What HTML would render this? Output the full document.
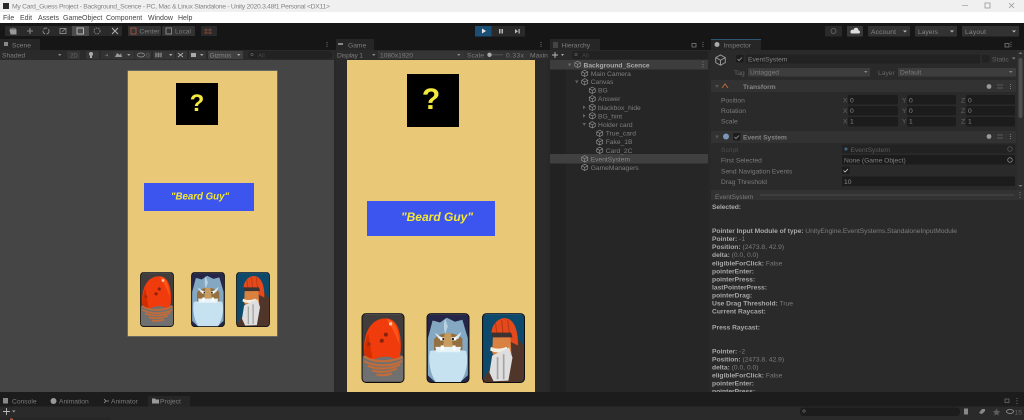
<!DOCTYPE html>
<html><head><meta charset="utf-8"><style>
html,body{margin:0;padding:0;background:#282828;width:1024px;height:420px;overflow:hidden}
svg{display:block}
text{font-family:"Liberation Sans",sans-serif;font-size:6.7px;fill:#aaa;white-space:pre}
.b{font-weight:bold;fill:#a8a8a8}
.d{fill:#7c7c7c}
.t{fill:#858585}
.m{fill:#666}
.i{fill:none;stroke:#999;stroke-width:.8}
</style></head><body>
<svg width="1024" height="420" viewBox="0 0 1024 420" xmlns="http://www.w3.org/2000/svg">
<defs>
<filter id="s" x="0" y="0" width="100%" height="100%"><feGaussianBlur stdDeviation="0.38"/></filter>
<symbol id="c" viewBox="0 0 10 10"><path d="M5 .8 9 3v4.2L5 9.3 1 7.2V3zM1 3l4 2.200L9 3M5 5.200v4" fill="none" stroke="#999" stroke-width=".8"/></symbol>
<symbol id="k1" viewBox="0 0 127 207">
<rect x="1" y="1" width="125" height="205" rx="12" fill="#423c3c"/>
<rect x="3" y="125" width="121" height="78" rx="8" fill="#707070"/>
<path d="M8 118C4 62 26 16 72 16c36 0 46 44 44 92-1 24-8 32-22 26-20-9-36-4-52 1-22 7-33 2-34-17z" fill="#f03a08"/>
<path d="M74 18c24 0 36 32 38 76-14-40-28-58-38-76z" fill="#ff5418"/>
<path d="M8 118c2-20 4-40 12-58 4 30 8 50 12 72-14 4-23 2-24-14z" fill="#d42e05"/>
<circle cx="86" cy="32" r="5" fill="#ffc9a8"/><circle cx="72" cy="64" r="6" fill="#8a2208"/><circle cx="60" cy="82" r="6" fill="#8a2208"/><circle cx="22" cy="92" r="5" fill="#9c2a0a"/>
<path d="M8 128c22 18 74 20 114 2M8 142c28 16 80 18 112 0M18 156c28 12 66 10 96-3M32 170c24 7 50 4 72-6M44 182c15 3 32 2 46-3" fill="none" stroke="#c06c3a" stroke-width="6.500"/>
<rect x="1.500" y="1.500" width="124" height="204" rx="12" fill="none" stroke="#111" stroke-width="3"/>
<path d="M10 3h107" stroke="#555" stroke-width="3"/>
</symbol>
<symbol id="k2" viewBox="0 0 127 207">
<rect x="1" y="1" width="125" height="205" rx="12" fill="#28284a"/>
<path d="M4 75 18 22l22 6 20-14 24 12 22-6 16 54v110L100 204H25L4 184z" fill="#84a8c2"/>
<path d="M22 78c15-24 66-24 84-2v44H22z" fill="#94703f"/>
<path d="M24 58 60 82 36 76zM104 56 70 82l24-6z" fill="#d9e8f2"/>
<path d="M55 16c-6 16-4 32 0 46l8-22z" fill="#b8d2e2"/>
<rect x="40" y="72" width="16" height="9" fill="#fff"/><rect x="72" y="72" width="16" height="9" fill="#fff"/><rect x="47" y="74" width="6" height="6" fill="#222"/><rect x="75" y="74" width="6" height="6" fill="#222"/>
<path d="M54 60h18l7 48H48z" fill="#c79c60"/>
<path d="M10 112 45 108h38l34 4c8 32 0 68-16 92H28C12 184 4 144 10 112z" fill="#c6e2f1"/>
<path d="M26 100h76l-4 16H30z" fill="#e6f3f9"/><rect x="42" y="96" width="9" height="14" fill="#fff"/><rect x="77" y="96" width="9" height="14" fill="#fff"/>
<rect x="1.500" y="1.500" width="124" height="204" rx="12" fill="none" stroke="#111" stroke-width="3"/>
<path d="M10 3h107" stroke="#444" stroke-width="3"/>
</symbol>
<symbol id="k3" viewBox="0 0 127 207">
<rect x="1" y="1" width="125" height="205" rx="12" fill="#0c4a6a"/>
<path d="M50 125 100 68l26 32v94l-14 12H3V196z" fill="#4f3429"/>
<path d="M28 60c0-28 24-50 46-44 24 6 34 44 32 80L28 58z" fill="#e3481a"/>
<path d="M40 30l4 32M58 20l4 42M76 20l6 56" stroke="#b83810" stroke-width="3"/>
<path d="M28 58h58l4 14H30z" fill="#3a3030"/>
<path d="M32 72h52l3 50-24 24-28-18-8-20 4-10z" fill="#d8813f"/>
<path d="M26 100c14 8 32 6 46 0l6 9c-14 10-38 10-54 2z" fill="#f2eee2"/>
<path d="M30 126 80 102l10 30-12 68-44 2-12-26z" fill="#dedede"/>
<path d="M46 130v66M64 122v74" stroke="#a4a4a4" stroke-width="5"/>
<rect x="1.500" y="1.500" width="124" height="204" rx="12" fill="none" stroke="#111" stroke-width="3"/>
<path d="M10 3h107" stroke="#3c5a6c" stroke-width="3"/>
</symbol>
</defs>
<g filter="url(#s)">
<!-- Window chrome -->
<rect width="1024" height="12" fill="#f0f0f0"/>
<rect y="12" width="1024" height="11" fill="#fff"/>
<rect x="3" y="3" width="6" height="6" fill="#2a2a2a"/>
<text x="12" y="8.600" textLength="318" lengthAdjust="spacing" style="fill:#858585;font-size:6.800px">My Card_Guess Project - Background_Scence - PC, Mac &amp; Linux Standalone - Unity 2020.3.48f1 Personal &lt;DX11&gt;</text>
<path d="M962 5.500h6" stroke="#aaa" stroke-width=".8"/>
<rect x="985" y="3" width="5" height="5" fill="none" stroke="#999" stroke-width=".8"/>
<path d="M1009 3l5 5M1014 3l-5 5" stroke="#999" stroke-width=".8"/>
<g style="font-size:7px"><text x="3" y="20" style="fill:#444;font-size:7px">File</text><text x="20" y="20" style="fill:#444;font-size:7px">Edit</text><text x="38" y="20" style="fill:#444;font-size:7px">Assets</text><text x="63" y="20" style="fill:#444;font-size:7px">GameObject</text><text x="106" y="20" style="fill:#444;font-size:7px">Component</text><text x="148" y="20" style="fill:#444;font-size:7px">Window</text><text x="178" y="20" style="fill:#444;font-size:7px">Help</text></g>

<!-- Toolbar -->
<rect y="23" width="1024" height="27" fill="#191919"/>
<rect x="5" y="26" width="117" height="10" rx="1" fill="#2b2b2b"/>
<rect x="72" y="26" width="17" height="10" fill="#4c4c4c"/>
<rect x="128" y="26" width="33" height="10" rx="1" fill="#303030"/>
<rect x="162" y="26" width="33" height="10" rx="1" fill="#303030"/>
<rect x="201" y="26" width="16" height="10" rx="1" fill="#2c2c2c"/>
<path d="M10 30h6v4h-5zM11 28v3M13 27.500v3M15 28v3" stroke="#999" stroke-width="1" fill="#999"/>
<path d="M27 31h6M30 28v6" stroke="#888" stroke-width="1.100"/>
<circle cx="46" cy="31" r="3" class="i" stroke-dasharray="4 1.500"/>
<rect x="60" y="28.500" width="6" height="5" class="i"/><path d="M62 32l3-3" class="i"/>
<rect x="77" y="28" width="6.500" height="6" fill="none" stroke="#ccc" stroke-width=".8"/>
<circle cx="97" cy="31" r="3" class="i" stroke-dasharray="1.500 1"/>
<path d="M112 28l6 6M118 28l-6 6" stroke="#aaa" stroke-width="1.100"/>
<rect x="131" y="28" width="5" height="6" fill="none" stroke="#b8583a" stroke-width=".8"/>
<text x="139.500" y="33.500" class="d" textLength="20">Center</text>
<rect x="166" y="28" width="5.500" height="6" class="i"/>
<text x="175" y="33.500" class="d" textLength="16">Local</text>
<path d="M206 28v6M210 28v6M204 30h8M204 33h8" stroke="#8a4a34" stroke-width=".7"/>
<rect x="475" y="26" width="16.500" height="10.500" fill="#1f4f75"/>
<rect x="491.500" y="26" width="33.500" height="10.500" fill="#2c2c2c"/>
<path d="M482 28.500v5l4-2.500z" fill="#e8e8e8"/>
<path d="M499 29h1.500v4.500H499zM501.500 29h1.500v4.500h-1.500z" fill="#bbb"/>
<path d="M515 29l3 2.200-3 2.300zM518.500 29h1.200v4.500h-1.200z" fill="#bbb"/>
<rect x="825" y="26" width="17" height="10.500" rx="1" fill="#2a2a2a"/>
<circle cx="833.500" cy="31" r="2.500" fill="none" stroke="#6c6c6c" stroke-width=".8"/>
<rect x="847" y="26" width="16" height="10.500" rx="1" fill="#383838"/>
<path d="M851.500 33.500h7a1.500 1.500 0 0 0 0-3 2.500 2.500 0 0 0-5-.5 1.800 1.800 0 0 0-2 3.500z" fill="#ddd"/>
<rect x="868" y="26" width="42" height="10.500" rx="1" fill="#323232"/>
<rect x="915" y="26" width="42" height="10.500" rx="1" fill="#323232"/>
<rect x="962" y="26" width="57" height="10.500" rx="1" fill="#323232"/>
<text x="871" y="33.800" class="t" textLength="25">Account</text><path d="M903 30.500h4l-2 2z" fill="#bbb"/>
<text x="918" y="33.800" class="t" textLength="20">Layers</text><path d="M950 30.500h4l-2 2z" fill="#bbb"/>
<text x="965" y="33.800" class="t" textLength="21">Layout</text><path d="M1012 30.500h4l-2 2z" fill="#bbb"/>

<!-- Tabs -->
<rect y="39" width="1024" height="11" fill="#191919"/>
<rect x="0" y="39" width="40" height="11" fill="#282828"/>
<rect x="336" y="39" width="38" height="11" fill="#282828"/>
<rect x="550" y="39" width="50" height="11" fill="#282828"/>
<rect x="711" y="39" width="50" height="11" fill="#282828"/>
<rect x="711" y="39" width="50" height=".7" fill="#2f6a92"/>
<rect x="4" y="42" width="4" height="4" fill="#888"/>
<text x="12" y="47.300" class="d">Scene</text>
<path d="M338 44h5" stroke="#888" stroke-width="2"/>
<text x="348" y="47.300" class="d">Game</text>
<path d="M553 43h5M553 45h5M553 47h5" stroke="#777" stroke-width=".7"/>
<text x="561.500" y="47.300" class="d">Hierarchy</text>
<circle cx="717" cy="44.500" r="2.500" fill="#aaa"/>
<text x="723.500" y="47.300" class="d">Inspector</text>
<path d="M327 42v.8M327 44v.8M327 46v.8M541 42v.8M541 44v.8M541 46v.8M703 42v.8M703 44v.8M703 46v.8M1011 42v.8M1011 44v.8M1011 46v.8" stroke="#999" stroke-width=".9"/>
<rect x="692" y="43.500" width="4" height="3.500" fill="none" stroke="#888" stroke-width=".7"/>
<rect x="1005" y="43.500" width="4" height="3.500" fill="none" stroke="#888" stroke-width=".7"/>

<!-- Scene toolbar -->
<rect y="50" width="334" height="10" fill="#2c2c2c"/>
<text x="2" y="57.500" class="d">Shaded</text><path d="M58 54h3.500l-1.700 2z" fill="#888"/>
<rect x="67" y="51" width="13" height="8" fill="#363636"/><text x="70" y="57.300" class="m" style="font-size:6px">2D</text>
<rect x="86" y="51" width="13" height="8" fill="#363636"/><circle cx="91" cy="54" r="2" fill="#aaa"/><rect x="90" y="55" width="2" height="3" fill="#aaa"/>
<rect x="101" y="51" width="12" height="8" fill="#303030"/><path d="M104 55h2l2-1.500v3z" fill="#666"/>
<rect x="113" y="51" width="21" height="8" fill="#363636"/><path d="M115 57l2-4 3 2 1-2 1 4z" fill="#999"/><path d="M127 54h3.500l-1.700 2z" fill="#999"/>
<rect x="135" y="51" width="16" height="8" fill="#363636"/><ellipse cx="141" cy="55" rx="3.500" ry="2" fill="none" stroke="#999" stroke-width=".7"/><text x="146" y="57.500" class="m">0</text>
<rect x="153" y="51" width="22" height="8" fill="#363636"/><path d="M156 52.500v5M158.500 52.500v5M161 52.500v5M155 54h7M155 56h7" stroke="#999" stroke-width=".7"/><path d="M169 54h3.500l-1.700 2z" fill="#aaa"/>
<rect x="176" y="51" width="11" height="8" fill="#363636"/><path d="M178 53l5 4M183 53l-5 4" stroke="#aaa" stroke-width=".9"/>
<rect x="189" y="51" width="17" height="8" fill="#363636"/><rect x="191" y="53" width="5" height="4" fill="#aaa"/><path d="M200 54h3.500l-1.700 2z" fill="#aaa"/>
<rect x="208" y="51" width="35" height="8" fill="#404040"/>
<text x="209.500" y="57.500" class="t" textLength="22">Gizmos</text><path d="M237 54h3.500l-1.700 2z" fill="#aaa"/>
<rect x="248" y="51" width="84" height="8" rx="3.500" fill="#212121"/>
<circle cx="252" cy="54.500" r="1.200" fill="none" stroke="#666" stroke-width=".6"/>
<text x="258" y="57.300" style="fill:#4a4a4a;font-size:6px">All</text>

<!-- Scene view -->
<rect x="0" y="60" width="334" height="334" fill="#444444"/>
<rect x="127.500" y="70.500" width="150" height="266" fill="#8a8a80"/>
<rect x="128" y="71" width="149" height="265" fill="#e9c877"/>
<rect x="176" y="83" width="42" height="42" fill="#000"/>
<text x="197" y="111" text-anchor="middle" class="b" style="fill:#f3ea3c;font-size:24px">?</text>
<rect x="144" y="183" width="110" height="28" fill="#3c54ef"/>
<text x="200" y="199.500" text-anchor="middle" class="b" style="fill:#f5e832;font-size:9.700px;font-style:italic">"Beard Guy"</text>
<use href="#k1" x="140" y="272" width="34" height="55"/>
<use href="#k2" x="191" y="272" width="34" height="55"/>
<use href="#k3" x="236" y="272" width="34" height="55"/>

<!-- Game -->
<rect x="336" y="50" width="211" height="10" fill="#2c2c2c"/>
<text x="337" y="57.500" class="d" textLength="26">Display 1</text><path d="M372 54h3.500l-1.700 2z" fill="#888"/>
<rect x="378" y="51" width="86" height="8" fill="#363636"/>
<text x="380" y="57.500" class="d" textLength="33">1080x1920</text><path d="M457 54h3.500l-1.700 2z" fill="#888"/>
<rect x="464" y="51" width="66" height="9" fill="#303030"/>
<text x="467" y="57.500" class="d" textLength="17">Scale</text>
<path d="M488 54.800h15" stroke="#555" stroke-width="1"/><circle cx="489.500" cy="54.800" r="2.200" fill="#aaa"/>
<text x="506" y="57.500" class="d" textLength="18">0.33x</text>
<text x="530" y="57.500" class="d">Maxin</text>
<rect x="336" y="60" width="211" height="334" fill="#292929"/>
<rect x="347" y="60" width="188" height="335" fill="#e9c877"/>
<rect x="407" y="74" width="52" height="53" fill="#000"/>
<text x="431" y="109" text-anchor="middle" class="b" style="fill:#f3ea3c;font-size:30px">?</text>
<rect x="367" y="201" width="128" height="35" fill="#3c54ef"/>
<text x="437" y="221" text-anchor="middle" class="b" style="fill:#f5e832;font-size:12px;font-style:italic">"Beard Guy"</text>
<use href="#k1" x="361.500" y="313" width="43" height="70"/>
<use href="#k2" x="426.500" y="313" width="43" height="70"/>
<use href="#k3" x="481.500" y="313" width="44" height="70"/>

<!-- Hierarchy -->
<rect x="550" y="50" width="158" height="344" fill="#282828"/>
<rect x="550" y="60" width="16" height="334" fill="#232323"/>
<rect x="550" y="50" width="158" height="10" fill="#2c2c2c"/>
<path d="M552 55h6M555 52v6" stroke="#bbb" stroke-width=".9"/><path d="M561 54h3l-1.500 2z" fill="#aaa"/>
<rect x="572" y="51" width="136" height="8" rx="2" fill="#202020"/>
<circle cx="576" cy="54.500" r="1.200" fill="none" stroke="#666" stroke-width=".6"/>
<text x="582" y="57.300" style="fill:#4a4a4a;font-size:6px">All</text>
<rect x="550" y="60" width="158" height="9.500" fill="#3c3c3c"/>
<path d="M567.500 63.500h4l-2 3z" fill="#666"/>
<use href="#c" x="574" y="60.500" width="7.500" height="7.500"/>
<text x="583.500" y="67.300" class="b" style="fill:#aaa">Background_Scence</text>
<path d="M703 61.500v.8M703 64v.8M703 66.500v.8" stroke="#999" stroke-width=".9"/>
<rect x="550" y="154" width="158" height="9.500" fill="#414141"/>
<g>
<use href="#c" x="581" y="69.500" width="7.500" height="7.500"/><text x="590.700" y="75.800" class="d">Main Camera</text>
<path d="M575 80.500h3.500l-1.700 2.700z" fill="#666"/><use href="#c" x="581" y="78" width="7.500" height="7.500"/><text x="590.700" y="84.200" class="d">Canvas</text>
<use href="#c" x="588.500" y="86.500" width="7.500" height="7.500"/><text x="598" y="92.500" class="d">BG</text>
<use href="#c" x="588.500" y="95" width="7.500" height="7.500"/><text x="598" y="101.200" class="d">Answer</text>
<path d="M583 105.500l2.700 1.800-2.700 1.800z" fill="#666"/><use href="#c" x="588.500" y="103.500" width="7.500" height="7.500"/><text x="598" y="109.800" class="d">blackbox_hide</text>
<path d="M583 114l2.700 1.800-2.700 1.800z" fill="#666"/><use href="#c" x="588.500" y="112" width="7.500" height="7.500"/><text x="598" y="118.500" class="d">BG_hint</text>
<path d="M582.500 123h3.500l-1.700 2.700z" fill="#666"/><use href="#c" x="588.500" y="121" width="7.500" height="7.500"/><text x="598" y="127.200" class="d">Holder card</text>
<use href="#c" x="596" y="129.500" width="7.500" height="7.500"/><text x="605.700" y="135.500" class="d">True_card</text>
<use href="#c" x="596" y="138" width="7.500" height="7.500"/><text x="605.700" y="144.200" class="d">Fake_1B</text>
<use href="#c" x="596" y="146.500" width="7.500" height="7.500"/><text x="605.700" y="152.800" class="d">Card_2C</text>
<use href="#c" x="581" y="155" width="7.500" height="7.500"/><text x="590.700" y="161.300" class="t">EventSystem</text>
<use href="#c" x="581" y="163.500" width="7.500" height="7.500"/><text x="590.700" y="169.800" class="d">GameManagers</text>
</g>

<!-- Inspector -->
<rect x="711" y="50" width="313" height="344" fill="#292929"/>
<use href="#c" x="714.500" y="54" width="12" height="12"/>
<rect x="736" y="55" width="7.500" height="7.500" rx="1" fill="#1e1e1e"/><path d="M737.500 59l1.500 1.500 3-3" class="i"/>
<rect x="746" y="54.500" width="234" height="9" fill="#202020"/>
<text x="748" y="61.500" class="t">EventSystem</text>
<rect x="982" y="55" width="7.500" height="7.500" fill="#202020"/>
<text x="992" y="61.500" class="m">Static</text><path d="M1012 57.500h3.500l-1.700 2z" fill="#888"/>
<text x="734" y="74.800" class="m">Tag</text>
<rect x="748" y="68" width="122" height="8.500" fill="#3c3c3c"/>
<text x="750" y="74.300" class="d">Untagged</text><path d="M864 71h3.500l-1.700 2z" fill="#888"/>
<text x="878" y="74.800" class="m">Layer</text>
<rect x="898" y="68" width="118" height="8.500" fill="#3c3c3c"/>
<text x="900" y="74.300" class="d">Default</text><path d="M1009 71h3.500l-1.700 2z" fill="#888"/>
<rect x="711" y="80" width="305" height="12" fill="#313131"/>
<path d="M715 85h4l-2 3z" fill="#555"/>
<path d="M722 88l3-4 3 4" fill="none" stroke="#c06a30" stroke-width="1"/>
<text x="743" y="89" class="b" style="fill:#858585">Transform</text>
<circle cx="989" cy="86.500" r="2.400" fill="#999"/><path d="M997 85h6M997 88h6" stroke="#666" stroke-width=".8"/><path d="M1010.500 84v.8M1010.500 86v.8M1010.500 88v.8" stroke="#999" stroke-width=".9"/>
<g fill="#1f1f1f">
<rect x="848" y="95" width="50" height="9.500" rx="1"/><rect x="907" y="95" width="49" height="9.500" rx="1"/><rect x="966" y="95" width="49" height="9.500" rx="1"/>
<rect x="848" y="106" width="50" height="9.500" rx="1"/><rect x="907" y="106" width="49" height="9.500" rx="1"/><rect x="966" y="106" width="49" height="9.500" rx="1"/>
<rect x="848" y="117" width="50" height="9.500" rx="1"/><rect x="907" y="117" width="49" height="9.500" rx="1"/><rect x="966" y="117" width="49" height="9.500" rx="1"/>
</g>
<text x="721" y="102.300" class="d">Position</text><text x="721" y="113" class="d">Rotation</text><text x="721" y="123.500" class="d">Scale</text>
<g>
<text x="843" y="102.300" class="m">X</text><text x="850" y="102.300" class="t">0</text><text x="902" y="102.300" class="m">Y</text><text x="909" y="102.300" class="t">0</text><text x="961" y="102.300" class="m">Z</text><text x="968" y="102.300" class="t">0</text>
<text x="843" y="113" class="m">X</text><text x="850" y="113" class="t">0</text><text x="902" y="113" class="m">Y</text><text x="909" y="113" class="t">0</text><text x="961" y="113" class="m">Z</text><text x="968" y="113" class="t">0</text>
<text x="843" y="123.500" class="m">X</text><text x="850" y="123.500" class="t">1</text><text x="902" y="123.500" class="m">Y</text><text x="909" y="123.500" class="t">1</text><text x="961" y="123.500" class="m">Z</text><text x="968" y="123.500" class="t">1</text>
</g>
<rect x="711" y="131" width="305" height="12" fill="#313131"/>
<path d="M715 135.500h4l-2 3z" fill="#555"/>
<circle cx="726" cy="136.500" r="3" fill="#7a98b6"/>
<rect x="733" y="133" width="7.500" height="7.500" rx="1" fill="#1e1e1e"/><path d="M734.500 137l1.500 1.500 3-3" class="i"/>
<text x="743" y="139.300" class="b" style="fill:#858585">Event System</text>
<circle cx="989" cy="136.500" r="2.400" fill="#999"/><path d="M997 135h6M997 138h6" stroke="#666" stroke-width=".8"/><path d="M1010.500 134v.8M1010.500 136v.8M1010.500 138v.8" stroke="#999" stroke-width=".9"/>
<text x="721" y="152" style="fill:#505050">Script</text>
<rect x="842" y="144.500" width="173" height="9" fill="#242424"/>
<circle cx="846" cy="149" r="1.500" fill="#3f6a88"/><text x="850.500" y="152" style="fill:#5a5a5a">EventSystem</text>
<circle cx="1010" cy="149" r="2.300" fill="none" stroke="#555" stroke-width=".8"/>
<text x="721" y="162.700" class="d">First Selected</text>
<rect x="842" y="155" width="173" height="9.500" fill="#1f1f1f"/>
<text x="844" y="162.700" class="d">None (Game Object)</text>
<circle cx="1010" cy="160" r="2.300" fill="none" stroke="#888" stroke-width=".8"/>
<text x="721" y="173.300" class="d">Send Navigation Events</text>
<rect x="842" y="166.500" width="7.500" height="7.500" rx="1" fill="#1e1e1e"/><path d="M843.500 170.500l1.500 1.500 3-3" fill="none" stroke="#ccc" stroke-width=".8"/>
<text x="721" y="184" class="d">Drag Threshold</text>
<rect x="842" y="176.500" width="173" height="9.500" fill="#1f1f1f"/>
<text x="844" y="184" class="t">10</text>
<rect x="1017" y="50" width="7" height="140" fill="#2d2d2d"/>
<rect x="1018.500" y="58" width="4" height="60" rx="2" fill="#505050"/>
<path d="M1018.500 54h4l-2-2zM1018.500 185h4l-2 2z" fill="#777"/>
<rect x="711" y="190" width="313" height="10" fill="#313131"/>
<text x="715" y="199.200" class="d" style="font-size:6.500px">EventSystem</text>
<rect x="760" y="194" width="254" height="2" fill="#3e3e3e"/>
<path d="M1020 192v.8M1020 194.500v.8M1020 197v.8" stroke="#999" stroke-width=".9"/>
<rect x="711" y="200" width="313" height="192" fill="#2a2a2a"/>
<g>
<text x="712" y="209" class="b" textLength="29">Selected:</text>
<text x="712" y="233" textLength="245"><tspan class="b">Pointer Input Module of type:</tspan><tspan class="d"> UnityEngine.EventSystems.StandaloneInputModule</tspan></text>
<text x="712" y="241"><tspan class="b">Pointer:</tspan><tspan class="d"> -1</tspan></text>
<text x="712" y="249"><tspan class="b">Position:</tspan><tspan class="d"> (2473.8, 42.9)</tspan></text>
<text x="712" y="257"><tspan class="b">delta:</tspan><tspan class="d"> (0.0, 0.0)</tspan></text>
<text x="712" y="265.300"><tspan class="b">eligibleForClick:</tspan><tspan class="d"> False</tspan></text>
<text x="712" y="273.300" class="b">pointerEnter:</text>
<text x="712" y="281.300" class="b">pointerPress:</text>
<text x="712" y="289.300" class="b">lastPointerPress:</text>
<text x="712" y="297.300" class="b">pointerDrag:</text>
<text x="712" y="305.300"><tspan class="b">Use Drag Threshold:</tspan><tspan class="d"> True</tspan></text>
<text x="712" y="313.500" class="b">Current Raycast:</text>
<text x="712" y="329.500" class="b">Press Raycast:</text>
<text x="712" y="353.500"><tspan class="b">Pointer:</tspan><tspan class="d"> -2</tspan></text>
<text x="712" y="361.500"><tspan class="b">Position:</tspan><tspan class="d"> (2473.8, 42.9)</tspan></text>
<text x="712" y="369.500"><tspan class="b">delta:</tspan><tspan class="d"> (0.0, 0.0)</tspan></text>
<text x="712" y="377.500"><tspan class="b">eligibleForClick:</tspan><tspan class="d"> False</tspan></text>
<text x="712" y="385.500" class="b">pointerEnter:</text>
<text x="712" y="393.500" class="b">pointerPress:</text>
</g>
<!-- Bottom -->
<rect x="0" y="392" width="1024" height="28" fill="#1a1a1a"/>
<rect x="148" y="396" width="42" height="10.500" fill="#282828"/>
<rect x="0" y="406.500" width="1024" height="13.500" fill="#2c2c2c"/>
<rect x="3" y="398" width="5" height="5.500" fill="#888"/>
<text x="12" y="403.500" class="d">Console</text>
<circle cx="53.500" cy="401" r="3" fill="#999"/>
<text x="59" y="403.500" class="d">Animation</text>
<path d="M104 399l2 2-2 2M106 401h3" stroke="#999" stroke-width=".8" fill="none"/>
<text x="111" y="403.500" class="d">Animator</text>
<path d="M152 398.500h3l1 1h3v4h-7z" fill="#999"/>
<text x="160" y="403.500" class="d">Project</text>
<rect x="1005" y="399" width="4" height="3.500" fill="none" stroke="#777" stroke-width=".7"/>
<path d="M1017 398v.8M1017 400.500v.8M1017 403v.8" stroke="#999" stroke-width=".9"/>
<path d="M3 411.500h7M6.500 408v7" stroke="#bbb" stroke-width=".9"/><path d="M12 410.500h3.500l-1.700 2z" fill="#999"/>
<rect x="800" y="407.500" width="160" height="8.500" rx="3" fill="#1e1e1e"/>
<circle cx="804" cy="411" r="1.200" fill="none" stroke="#777" stroke-width=".6"/>
<rect x="964" y="408.500" width="4" height="6" fill="#888"/>
<path d="M979 413l3-4h3v2l-3 3z" fill="#888"/>
<path d="M996.500 408.500l1.200 2.500 2.500.3-1.900 1.800.5 2.400-2.300-1.300-2.300 1.300.5-2.400-1.900-1.800 2.500-.3z" fill="#5c5c5c"/>
<ellipse cx="1010" cy="411.500" rx="3.500" ry="2" fill="none" stroke="#999" stroke-width=".8"/>
<text x="1014.500" y="414.500" class="m">15</text>
<rect x="0" y="417.500" width="110" height="2.500" fill="#262626"/>
<rect x="10" y="418.500" width="3" height="1.500" fill="#b8583a"/>
</g>
</svg>
</body></html>
